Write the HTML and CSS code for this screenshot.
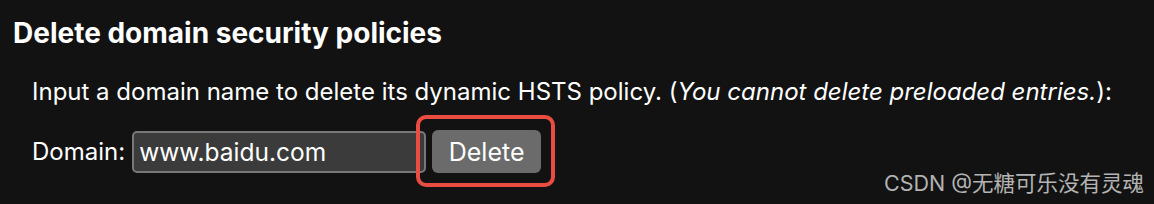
FILE: index.html
```html
<!DOCTYPE html>
<html>
<head>
<meta charset="utf-8">
<link rel="stylesheet" href="styles.css">
</head>
<body>
<div class="page">
  <h2 class="title">Delete domain security policies</h2>
  <div class="section">
    <p class="desc">Input a domain name to delete its dynamic HSTS policy. (<em>You cannot delete preloaded entries.</em>):</p>
    <div class="form-row">
      <label class="label" for="domain">Domain:</label>
      <input class="field" id="domain" type="text" value="www.baidu.com">
      <span class="btn-wrap"><button class="btn">Delete</button></span>
    </div>
  </div>
  <div class="watermark">CSDN @无糖可乐没有灵魂</div>
</div>
</body>
</html>
```

FILE: styles.css
```css
html, body {
  margin: 0;
  padding: 0;
  background: #121212;
}
.page {
  position: relative;
  width: 1154px;
  height: 204px;
  overflow: hidden;
  font-family: Inter, "Noto Sans", "Noto Sans CJK SC", sans-serif;
  color: #ffffff;
}
.title {
  margin: 0;
  padding: 16px 0 0 13px;
  font-size: 28px;
  font-weight: 700;
  line-height: 34px;
}
.section {
  padding: 27px 0 0 32px;
}
.desc {
  margin: 0;
  font-size: 24px;
  line-height: 29px;
}
.form-row {
  display: flex;
  align-items: center;
  margin-top: 24px;
}
.label {
  font-size: 24px;
  margin-right: 7px;
}
.field {
  box-sizing: border-box;
  width: 294px;
  height: 42px;
  background: #3b3b3b;
  border: 2px solid #787878;
  border-radius: 5px;
  color: #ffffff;
  font-family: Inter, sans-serif;
  font-size: 24.5px;
  padding: 0 5px;
  outline: none;
}
.btn-wrap {
  position: relative;
  margin-left: 6px;
  display: flex;
}
.btn-wrap::after {
  content: "";
  position: absolute;
  left: -16px;
  top: -15px;
  right: -14px;
  bottom: -14px;
  border: 4px solid #e94c40;
  border-radius: 10px;
}
.btn {
  box-sizing: border-box;
  width: 109px;
  height: 43px;
  background: #6b6b6b;
  border: none;
  border-radius: 6px;
  color: #ffffff;
  font-family: Inter, sans-serif;
  font-size: 25px;
  padding: 0;
}
.watermark {
  position: absolute;
  left: 884px;
  top: 169px;
  font-size: 21.5px;
  line-height: 28px;
  color: #b3b3b3;
  font-family: Inter, "Noto Sans CJK SC", sans-serif;
}
```
